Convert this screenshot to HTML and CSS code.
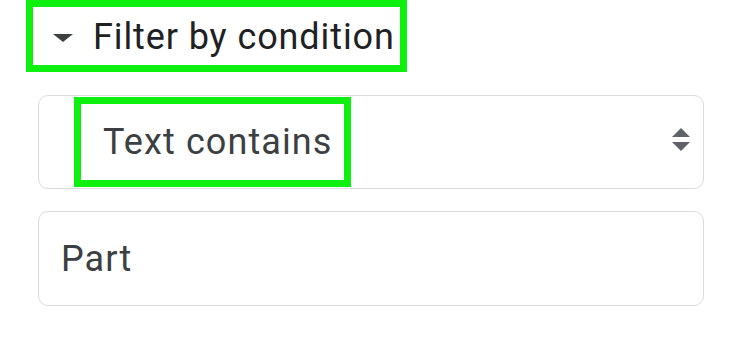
FILE: index.html
```html
<!DOCTYPE html>
<html lang="en">
<head>
    <meta charset="UTF-8">
    <title>Filter by condition</title>
    <link rel="stylesheet" href="styles.css">
</head>
<body>
    <div class="panel">
        <div class="section-head mark">
            <span class="caret"></span>
            <span class="section-title">Filter by condition</span>
        </div>
        <!-- condition select -->
        <div class="select">
            <div class="select-value mark">Text contains</div>
            <svg class="spinner" width="20" height="28" viewBox="0 0 20 28">
                <path d="M1 10 L10 1 L19 10 Z" fill="#5f6368"/>
                <path d="M1 15 L10 24 L19 15 Z" fill="#5f6368"/>
            </svg>
        </div>
        <!-- value input -->
        <div class="field">Part</div>
    </div>
</body>
</html>
```

FILE: styles.css
```css
body {
    margin: 0;
    background: #fff;
    font-family: Roboto, "Noto Sans", Arial, sans-serif;
    color: #3c4043;
}
.panel {
    width: 750px;
    height: 351px;
    display: flex;
    flex-direction: column;
    align-items: flex-start;
}
.mark {
    border: 7px solid #10f010;
    box-sizing: border-box;
}
.section-head {
    margin-left: 26px;
    height: 72px;
    width: 381px;
    display: flex;
    align-items: center;
    padding-left: 20px;
    padding-top: 2px;
}
.caret {
    width: 0;
    height: 0;
    border-left: 10px solid transparent;
    border-right: 10px solid transparent;
    border-top: 8px solid #3c4043;
    margin-right: 20px;
    margin-top: 2px;
}
.section-title {
    font-size: 36px;
    letter-spacing: 0.9px;
    color: #202124;
    white-space: nowrap;
}
.select {
    margin: 23px 0 0 38px;
    width: 666px;
    height: 94px;
    box-sizing: border-box;
    border: 1.5px solid #dadce0;
    border-radius: 10px;
    display: flex;
    align-items: center;
    padding-left: 35px;
    padding-right: 12px;
}
.select-value {
    height: 90px;
    width: 277px;
    display: flex;
    align-items: center;
    padding-left: 22px;
    font-size: 36px;
    letter-spacing: 1.1px;
    white-space: nowrap;
}
.spinner {
    margin-left: auto;
    margin-top: -2px;
}
.field {
    margin: 22px 0 0 38px;
    width: 666px;
    height: 95px;
    box-sizing: border-box;
    border: 1.5px solid #dadce0;
    border-radius: 10px;
    display: flex;
    align-items: center;
    padding-left: 22px;
    font-size: 36px;
    letter-spacing: 1.1px;
}
```
